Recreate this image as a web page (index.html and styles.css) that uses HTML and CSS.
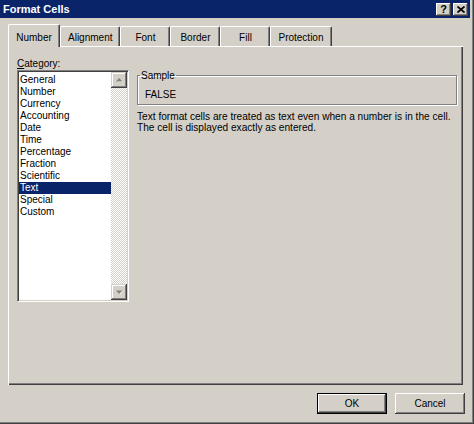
FILE: index.html
```html
<!DOCTYPE html>
<html>
<head>
<meta charset="utf-8">
<title>Format Cells</title>
<link rel="stylesheet" href="styles.css">
</head>
<body>
<div class="window">
  <div class="titlebar">
    <span class="title">Format Cells</span>
    <div class="caption-btns">
      <span class="cbtn help">?</span>
      <span class="cbtn close"><svg width="8" height="7" viewBox="0 0 8 7"><path d="M0.5 0.5 L7.5 6.5 M7.5 0.5 L0.5 6.5" stroke="#000" stroke-width="1.7" fill="none"/></svg></span>
    </div>
  </div>
  <div class="client">
    <div class="tabs">
      <div class="tab selected">Number</div>
      <div class="tab">Alignment</div>
      <div class="tab">Font</div>
      <div class="tab">Border</div>
      <div class="tab">Fill</div>
      <div class="tab">Protection</div>
    </div>
    <div class="panel">
      <div class="left">
        <div class="label"><u>C</u>ategory:</div>
        <div class="listbox">
          <ul class="items">
            <li>General</li>
            <li>Number</li>
            <li>Currency</li>
            <li>Accounting</li>
            <li>Date</li>
            <li>Time</li>
            <li>Percentage</li>
            <li>Fraction</li>
            <li>Scientific</li>
            <li class="sel">Text</li>
            <li>Special</li>
            <li>Custom</li>
          </ul>
          <div class="scrollbar">
            <div class="sbtn"><svg width="7" height="5" viewBox="0 0 7 5"><path d="M1 4 L7 4 L4 1 Z" fill="#fff"/><path d="M0 3.5 L6.5 3.5 L3.25 0 Z" fill="#808080"/></svg></div>
            <div class="track"></div>
            <div class="sbtn"><svg width="7" height="5" viewBox="0 0 7 5"><path d="M1 1 L7 1 L4 4.5 Z" fill="#fff"/><path d="M0 0.5 L6.5 0.5 L3.25 4 Z" fill="#808080"/></svg></div>
          </div>
        </div>
      </div>
      <div class="right">
        <fieldset class="group">
          <legend>Sample</legend>
          <div class="sample">FALSE</div>
        </fieldset>
        <p class="desc">Text format cells are treated as text even when a number is in the cell.<br>The cell is displayed exactly as entered.</p>
      </div>
    </div>
    <div class="buttons">
      <button class="btn default">OK</button>
      <button class="btn">Cancel</button>
    </div>
  </div>
</div>
</body>
</html>
```
FILE: styles.css
```css
* { box-sizing: border-box; }

body {
  margin: 0;
  background: #d4d0c8;
  font-family: "Liberation Sans", Arial, sans-serif;
  font-size: 10px;
  color: #000;
}

.window {
  width: 474px;
  height: 424px;
  background: #d4d0c8;
  display: flex;
  flex-direction: column;
  box-shadow: inset -1px -1px 0 #404040, inset -2px -2px 0 #808080;
  overflow: hidden;
}

.titlebar {
  height: 18px;
  margin-right: 4px;
  background: #0a246a;
  display: flex;
  align-items: center;
  justify-content: space-between;
  padding: 0 2px 0 3px;
}

.title {
  color: #fff;
  font-weight: bold;
  font-size: 11px;
}

.caption-btns {
  display: flex;
  gap: 2px;
}

.cbtn {
  width: 15px;
  height: 13px;
  background: #d4d0c8;
  box-shadow: inset -1px -1px 0 #404040, inset 1px 1px 0 #fff, inset -2px -2px 0 #808080;
  display: flex;
  align-items: center;
  justify-content: center;
  font-weight: bold;
  font-size: 11px;
  line-height: 13px;
}

.client {
  flex: 1;
  padding: 6px 9px 0 8px;
  display: flex;
  flex-direction: column;
}

.tabs {
  display: flex;
  align-items: flex-end;
  height: 22px;
}

.tab {
  height: 20px;
  min-width: 50px;
  padding: 5px 7px 0;
  text-align: center;
  line-height: 12px;
  border-top: 1px solid #fff;
  border-left: 1px solid #fff;
  border-right: 1px solid #404040;
  box-shadow: inset -1px 0 0 #808080;
  border-radius: 2px 2px 0 0;
  background: #d4d0c8;
}

.tab.selected {
  height: 23px;
  min-width: 52px;
  padding-top: 7px;
  margin-bottom: -1px;
  position: relative;
  z-index: 1;
}

.panel {
  width: 455px;
  height: 339px;
  border-top: 1px solid #fff;
  border-left: 1px solid #fff;
  box-shadow: inset -1px -1px 0 #404040, inset -2px -2px 0 #808080;
  display: flex;
  gap: 8px;
  padding: 11px 0 0 8px;
}

.left {
  width: 112px;
  display: flex;
  flex-direction: column;
}

.label {
  line-height: 12px;
}

.listbox {
  height: 232px;
  width: 112px;
  display: flex;
  border-top: 1px solid #808080;
  border-left: 1px solid #808080;
  border-bottom: 1px solid #fff;
  border-right: 1px solid #fff;
  padding: 1px;
  box-shadow: inset 1px 1px 0 #404040, inset -1px -1px 0 #d4d0c8;
  background: #fff;
}

.items {
  flex: 1;
  list-style: none;
  margin: 0;
  padding: 2px 0 0;
  background: #fff;
}

.items li {
  height: 12px;
  line-height: 12px;
  padding-left: 1px;
}

.items li.sel {
  background: #0a246a;
  color: #fff;
}

.scrollbar {
  width: 16px;
  display: flex;
  flex-direction: column;
  background: repeating-conic-gradient(#fff 0 25%, #d4d0c8 0 50%) 0 0 / 2px 2px;
}

.track {
  flex: 1;
}

.sbtn {
  height: 16px;
  background: #d4d0c8;
  display: flex;
  align-items: center;
  justify-content: center;
  box-shadow: inset -1px -1px 0 #404040, inset 1px 1px 0 #d4d0c8, inset -2px -2px 0 #808080, inset 2px 2px 0 #fff;
}

.right {
  flex: 1;
  margin-top: 12px;
  padding-right: 6px;
}

.group {
  margin: 0;
  padding: 8px 7px 3px;
  border: 1px solid #808080;
  box-shadow: inset 1px 1px 0 #fff, 1px 1px 0 #fff;
  min-width: 0;
}

.group legend {
  padding: 0 1px;
  margin-left: -5px;
  line-height: 11px;
}

.sample {
  line-height: 12px;
}

.desc {
  margin: 6px 0 0;
  font-size: 10.15px;
  line-height: 11px;
}

.buttons {
  display: flex;
  justify-content: flex-end;
  gap: 8px;
  margin-top: 8px;
}

.btn {
  width: 70px;
  height: 21px;
  font: inherit;
  color: #000;
  background: #d4d0c8;
  border: none;
  padding: 0;
  box-shadow: inset -1px -1px 0 #404040, inset 1px 1px 0 #fff, inset -2px -2px 0 #808080, inset 2px 2px 0 #d4d0c8;
}

.btn.default {
  border: 1px solid #000;
}
```
